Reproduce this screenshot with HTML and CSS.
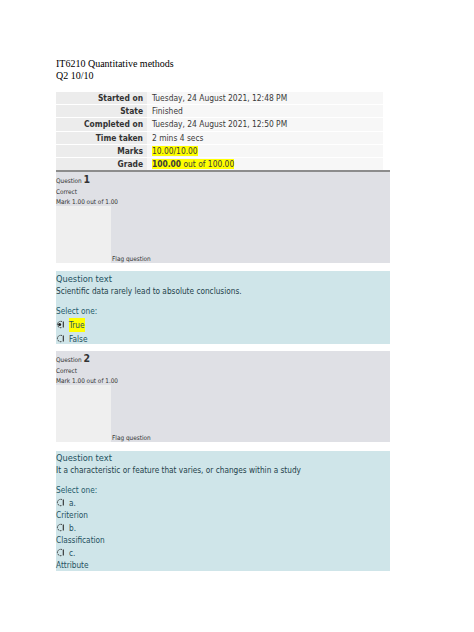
FILE: index.html
```html
<!DOCTYPE html>
<html>
<head>
<meta charset="utf-8">
<link rel="stylesheet" href="styles.css">
</head>
<body>
<div class="page">
  <div class="title">
    <div>IT6210 Quantitative methods</div>
    <div>Q2 10/10</div>
  </div>

  <div class="summary">
    <div class="row"><div class="lab">Started on</div><div class="val">Tuesday, 24 August 2021, 12:48 PM</div></div>
    <div class="row"><div class="lab">State</div><div class="val">Finished</div></div>
    <div class="row"><div class="lab">Completed on</div><div class="val">Tuesday, 24 August 2021, 12:50 PM</div></div>
    <div class="row"><div class="lab">Time taken</div><div class="val">2 mins 4 secs</div></div>
    <div class="row"><div class="lab">Marks</div><div class="val"><span class="hl">10.00/10.00</span></div></div>
    <div class="row"><div class="lab">Grade</div><div class="val"><span class="hl"><b>100.00</b> out of 100.00</span></div></div>
  </div>

  <div class="que first">
    <div class="info">
      <div class="qno">Question <span class="num">1</span></div>
      <div>Correct</div>
      <div>Mark 1.00 out of 1.00</div>
    </div>
    <div class="lower">
      <div class="side"></div>
      <div class="flag">Flag question</div>
    </div>
  </div>

  <div class="qtext-box q1">
    <div class="qhead">Question text</div>
    <div class="qtext">Scientific data rarely lead to absolute conclusions.</div>
    <div class="select">Select one:</div>
    <div class="opt tall"><svg class="radio" viewBox="0 0 9 9" width="9" height="9"><path d="M6 1.6 A3.2 3.2 0 1 0 6 7.4" fill="none" stroke="#2a2a2a" stroke-width="1" stroke-dasharray="1.6 0.9"/><line x1="7.3" y1="1.5" x2="7.3" y2="7.5" stroke="#2a2a2a" stroke-width="1.1"/><circle cx="3.6" cy="4.5" r="1.5" fill="#222"/></svg><span class="hl">True</span></div>
    <div class="opt tall"><svg class="radio" viewBox="0 0 9 9" width="9" height="9"><path d="M6 1.6 A3.2 3.2 0 1 0 6 7.4" fill="none" stroke="#2a2a2a" stroke-width="1" stroke-dasharray="1.6 0.9"/><line x1="7.3" y1="1.5" x2="7.3" y2="7.5" stroke="#2a2a2a" stroke-width="1.1"/></svg>False</div>
  </div>

  <div class="que second">
    <div class="info">
      <div class="qno">Question <span class="num">2</span></div>
      <div>Correct</div>
      <div>Mark 1.00 out of 1.00</div>
    </div>
    <div class="lower">
      <div class="side"></div>
      <div class="flag">Flag question</div>
    </div>
  </div>

  <div class="qtext-box q2">
    <div class="qhead">Question text</div>
    <div class="qtext">It a characteristic or feature that varies, or changes within a study</div>
    <div class="select">Select one:</div>
    <div class="opt"><svg class="radio" viewBox="0 0 9 9" width="9" height="9"><path d="M6 1.6 A3.2 3.2 0 1 0 6 7.4" fill="none" stroke="#2a2a2a" stroke-width="1" stroke-dasharray="1.6 0.9"/><line x1="7.3" y1="1.5" x2="7.3" y2="7.5" stroke="#2a2a2a" stroke-width="1.1"/></svg>a.</div>
    <div class="opt">Criterion</div>
    <div class="opt"><svg class="radio" viewBox="0 0 9 9" width="9" height="9"><path d="M6 1.6 A3.2 3.2 0 1 0 6 7.4" fill="none" stroke="#2a2a2a" stroke-width="1" stroke-dasharray="1.6 0.9"/><line x1="7.3" y1="1.5" x2="7.3" y2="7.5" stroke="#2a2a2a" stroke-width="1.1"/></svg>b.</div>
    <div class="opt">Classification</div>
    <div class="opt"><svg class="radio" viewBox="0 0 9 9" width="9" height="9"><path d="M6 1.6 A3.2 3.2 0 1 0 6 7.4" fill="none" stroke="#2a2a2a" stroke-width="1" stroke-dasharray="1.6 0.9"/><line x1="7.3" y1="1.5" x2="7.3" y2="7.5" stroke="#2a2a2a" stroke-width="1.1"/></svg>c.</div>
    <div class="opt">Attribute</div>
  </div>
</div>
</body>
</html>
```

FILE: styles.css
```css
html, body {
  margin: 0;
  padding: 0;
  background: #ffffff;
}

.page {
  padding: 58px 0 0 56px;
  width: 334px;
  font-family: "DejaVu Sans Condensed", "DejaVu Sans", sans-serif;
  font-stretch: semi-condensed;
}

.title {
  font-family: "Liberation Serif", serif;
  font-size: 10px;
  line-height: 11.5px;
  color: #000;
}

.summary {
  margin-top: 10px;
  width: 327px;
  font-size: 8.4px;
  color: #3a3a3a;
}

.row {
  display: grid;
  grid-template-columns: 91px 1fr;
  border-top: 1px solid #ffffff;
  height: 12.2px;
  line-height: 12.2px;
}

.lab {
  background: #ececec;
  text-align: right;
  font-weight: bold;
  padding-right: 4px;
  color: #333;
}

.val {
  background: #f7f7f7;
  padding-left: 5px;
}

.hl {
  background: #ffff00;
}

.que {
  background: #dfe0e5;
  height: 91px;
  display: flex;
  flex-direction: column;
  font-size: 6.4px;
  color: #333;
}

.que.first {
  border-top: 2px solid #8c8c8c;
  margin-top: 0;
}

.que.second {
  margin-top: 7px;
}

.info {
  height: 34px;
  padding-top: 2px;
  box-sizing: border-box;
  line-height: 10px;
}

.qno {
  line-height: 11px;
}

.num {
  font-size: 10.5px;
  font-weight: bold;
}

.lower {
  flex: 1;
  display: flex;
}

.side {
  width: 55px;
  background: #efefef;
}

.flag {
  align-self: flex-end;
  padding-left: 1px;
  line-height: 8px;
  padding-bottom: 0;
}

.qtext-box {
  background: #cfe5e9;
  color: #1e3f49;
  font-size: 8.2px;
}

.qtext-box.q1 {
  margin-top: 8px;
  padding-top: 2px;
  height: 71px;
}

.qtext-box.q2 {
  margin-top: 9px;
  padding-top: 1px;
  height: 119px;
}

.qhead {
  font-size: 9.2px;
  line-height: 12px;
  color: #23505e;
}

.qtext {
  line-height: 12px;
}

.select {
  margin-top: 7.5px;
  line-height: 13px;
  color: #235a69;
}

.opt {
  line-height: 12.5px;
  display: flex;
  align-items: center;
  color: #1f5060;
}

.opt.tall {
  line-height: 14px;
}

.radio {
  margin-right: 4px;
  flex: none;
}
```
